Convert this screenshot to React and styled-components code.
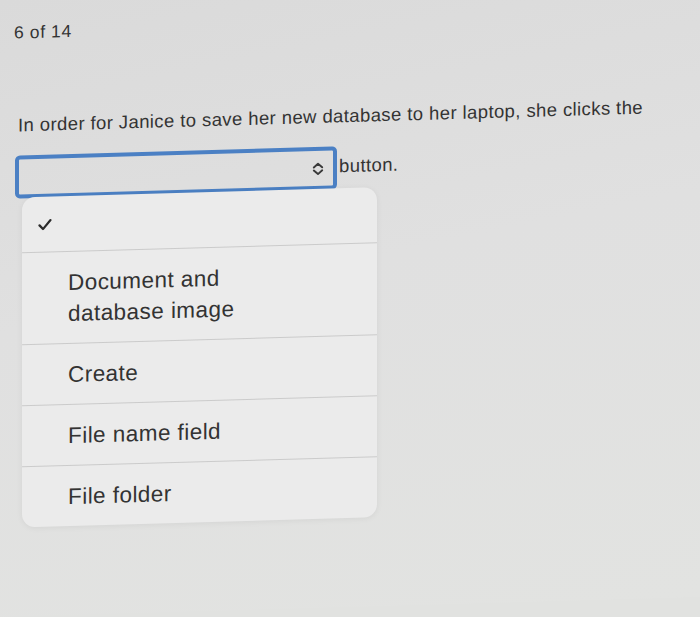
import React from "react";
import styled, { createGlobalStyle } from "styled-components";

const GlobalStyle = createGlobalStyle`
  html, body {
    margin: 0;
    padding: 0;
    background: #e1e2e0;
    overflow: hidden;
  }
  body {
    font-family: "Liberation Sans", Arial, sans-serif;
    color: #2f2f2f;
  }
`;

const Page = styled.div`
  width: 700px;
  height: 617px;
  box-sizing: border-box;
  padding: 23px 0 0 14px;
  background: linear-gradient(170deg, #dadada 0%, #e0e0e0 45%, #e2e3e1 100%);
  transform: skewY(-1.64deg);
  transform-origin: 0 0;
`;

const Counter = styled.div`
  font-size: 17.5px;
  letter-spacing: 0.6px;
  line-height: 20px;
  color: #333;
`;

const Question = styled.p`
  margin: 71px 0 0 4px;
  font-size: 18.5px;
  letter-spacing: 0.4px;
  line-height: 24px;
  color: #333;
`;

const AnswerLine = styled.div`
  display: flex;
  align-items: flex-start;
  gap: 2px;
  margin-top: 18px;
  margin-left: 1px;
`;

const SelectWrap = styled.div`
  position: relative;
`;

const SelectBox = styled.div`
  width: 322px;
  height: 43px;
  box-sizing: border-box;
  border: 4px solid #4b80c4;
  border-radius: 5px;
  display: flex;
  align-items: center;
  justify-content: flex-end;
  padding-right: 8px;
`;

const Trailing = styled.span`
  font-size: 18.5px;
  letter-spacing: 0.4px;
  line-height: 24px;
  padding-top: 8px;
  color: #333;
`;

const Menu = styled.ul`
  position: absolute;
  top: 42px;
  left: 7px;
  width: 355px;
  margin: 0;
  padding: 0;
  list-style: none;
  background: #ebebeb;
  border-radius: 13px;
  box-shadow: 0 1px 6px rgba(0, 0, 0, 0.06);
  overflow: hidden;
`;

const Option = styled.li`
  display: flex;
  align-items: center;
  min-height: ${(p) => (p.$check ? "55px" : "60px")};
  box-sizing: border-box;
  padding: ${(p) => (p.$check ? "0 0 0 16px" : "15px 0 14px 46px")};
  border-top: ${(p) => (p.$first ? "none" : "1.5px solid #cbcbcb")};
  font-size: 22.5px;
  letter-spacing: 0.45px;
  line-height: 31px;
  color: #333;
`;

const Chevrons = () => (
  <svg width="14" height="14" viewBox="0 0 14 14" fill="none">
    <path
      d="M2.8 5.5 L7 1.8 L11.2 5.5 M2.8 8.5 L7 12.2 L11.2 8.5"
      stroke="#3a3a3a"
      strokeWidth="1.9"
      strokeLinecap="round"
      strokeLinejoin="round"
    />
  </svg>
);

const Check = () => (
  <svg width="14" height="12" viewBox="0 0 14 12" fill="none">
    <path
      d="M1.5 6.5 L5 10.3 L12.5 1.5"
      stroke="#2c2c2c"
      strokeWidth="2.2"
      strokeLinecap="round"
      strokeLinejoin="round"
    />
  </svg>
);

const options = [
  "Document and database image",
  "Create",
  "File name field",
  "File folder",
];

const App = () => {
  return (
    <Page>
      <GlobalStyle />
      <Counter>6 of 14</Counter>
      <Question>
        In order for Janice to save her new database to her laptop, she clicks
        the
      </Question>
      <AnswerLine>
        <SelectWrap>
          <SelectBox>
            <Chevrons />
          </SelectBox>
          <Menu>
            <Option $check $first>
              <Check />
            </Option>
            {options.map((o, i) =>
              i === 0 ? (
                <Option key={o}>
                  Document and
                  <br />
                  database image
                </Option>
              ) : (
                <Option key={o}>{o}</Option>
              )
            )}
          </Menu>
        </SelectWrap>
        <Trailing>button.</Trailing>
      </AnswerLine>
    </Page>
  );
};

export default App;
